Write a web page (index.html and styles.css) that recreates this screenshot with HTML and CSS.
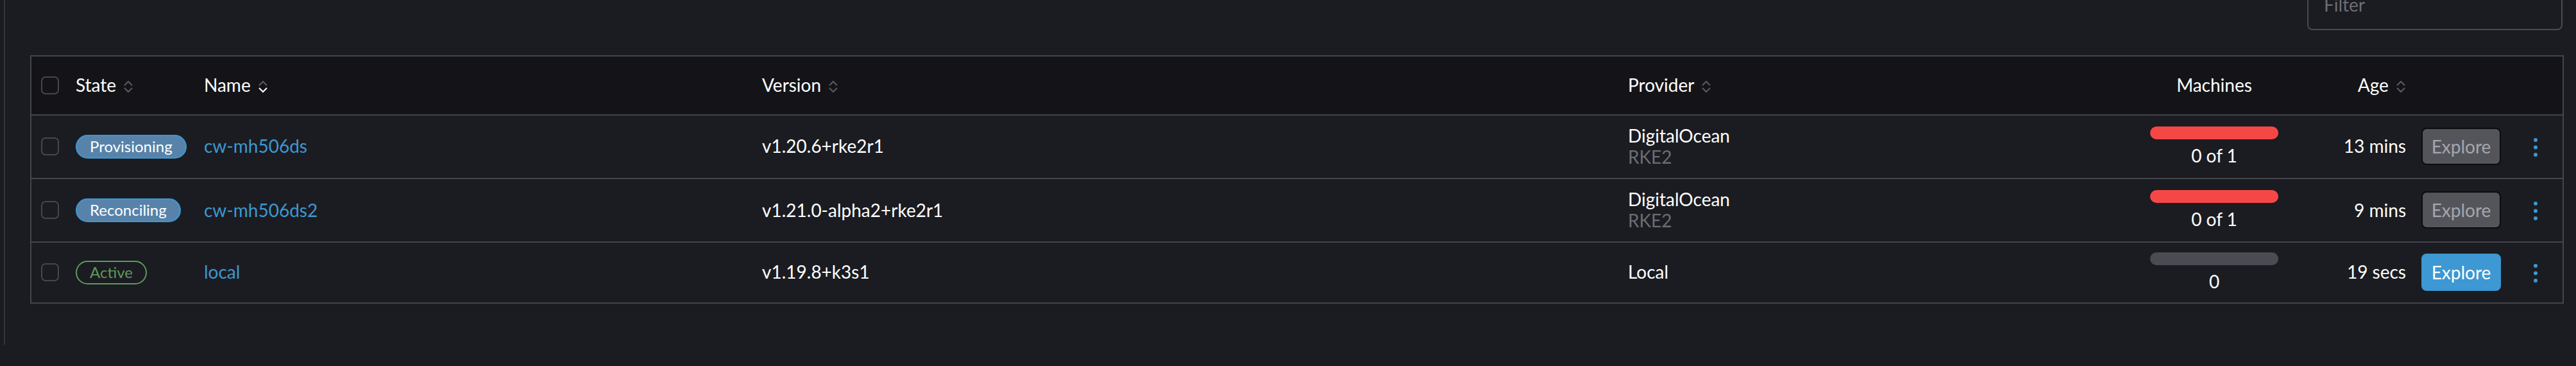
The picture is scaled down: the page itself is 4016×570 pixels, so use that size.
FILE: index.html
```html
<!DOCTYPE html>
<html lang="en">
<head>
    <meta charset="UTF-8">
    <meta name="viewport" content="width=device-width, initial-scale=1.0">
    <title>Clusters</title>
    <link rel="stylesheet" href="styles.css">
</head>
<body>
    <div class="main-content">
        <div class="table-header">
            <input type="search" class="filter-input" placeholder="Filter">
        </div>

        <table class="sortable-table">
            <colgroup>
                <col style="width: 69px">
                <col style="width: 200px">
                <col style="width: 870px">
                <col style="width: 1350px">
                <col style="width: 794px">
                <col style="width: 240px">
                <col style="width: 191px">
                <col style="width: 148px">
                <col style="width: 84px">
            </colgroup>
            <thead>
                <tr>
                    <th class="check"><span class="checkbox"></span></th>
                    <th>State <svg class="sort" viewBox="0 0 16 22"><polyline points="2,9 8,3 14,9" /><polyline points="2,13 8,19 14,13" /></svg></th>
                    <th>Name <svg class="sort sort-down" viewBox="0 0 16 22"><polyline points="2,9 8,3 14,9" /><polyline class="active" points="2,13 8,19 14,13" /></svg></th>
                    <th>Version <svg class="sort" viewBox="0 0 16 22"><polyline points="2,9 8,3 14,9" /><polyline points="2,13 8,19 14,13" /></svg></th>
                    <th>Provider <svg class="sort" viewBox="0 0 16 22"><polyline points="2,9 8,3 14,9" /><polyline points="2,13 8,19 14,13" /></svg></th>
                    <th class="center">Machines</th>
                    <th class="right">Age <svg class="sort" viewBox="0 0 16 22"><polyline points="2,9 8,3 14,9" /><polyline points="2,13 8,19 14,13" /></svg></th>
                    <th></th>
                    <th></th>
                </tr>
            </thead>
            <tbody>
                <tr>
                    <td class="check"><span class="checkbox"></span></td>
                    <td><span class="badge badge-info">Provisioning</span></td>
                    <td><a href="#" class="link">cw-mh506ds</a></td>
                    <td>v1.20.6+rke2r1</td>
                    <td>DigitalOcean<div class="text-muted">RKE2</div></td>
                    <td class="center">
                        <div class="machine-bar bar-error"></div>
                        <div>0 of 1</div>
                    </td>
                    <td class="right">13 mins</td>
                    <td class="btn-cell"><button class="btn btn-disabled">Explore</button></td>
                    <td class="center"><svg class="kebab" viewBox="0 0 8 32"><circle cx="4" cy="4" r="3" /><circle cx="4" cy="15.5" r="3" /><circle cx="4" cy="27" r="3" /></svg></td>
                </tr>
                <tr>
                    <td class="check"><span class="checkbox"></span></td>
                    <td><span class="badge badge-info">Reconciling</span></td>
                    <td><a href="#" class="link">cw-mh506ds2</a></td>
                    <td>v1.21.0-alpha2+rke2r1</td>
                    <td>DigitalOcean<div class="text-muted">RKE2</div></td>
                    <td class="center">
                        <div class="machine-bar bar-error"></div>
                        <div>0 of 1</div>
                    </td>
                    <td class="right">9 mins</td>
                    <td class="btn-cell"><button class="btn btn-disabled">Explore</button></td>
                    <td class="center"><svg class="kebab" viewBox="0 0 8 32"><circle cx="4" cy="4" r="3" /><circle cx="4" cy="15.5" r="3" /><circle cx="4" cy="27" r="3" /></svg></td>
                </tr>
                <tr>
                    <td class="check"><span class="checkbox"></span></td>
                    <td><span class="badge badge-success">Active</span></td>
                    <td><a href="#" class="link">local</a></td>
                    <td>v1.19.8+k3s1</td>
                    <td>Local</td>
                    <td class="center">
                        <div class="machine-bar"></div>
                        <div>0</div>
                    </td>
                    <td class="right">19 secs</td>
                    <td class="btn-cell"><button class="btn btn-primary">Explore</button></td>
                    <td class="center"><svg class="kebab" viewBox="0 0 8 32"><circle cx="4" cy="4" r="3" /><circle cx="4" cy="15.5" r="3" /><circle cx="4" cy="27" r="3" /></svg></td>
                </tr>
            </tbody>
        </table>
    </div>
</body>
</html>
```

FILE: styles.css
```css
body{
    margin: 0;
    background-color: #1b1c21;
    color: #ffffff;
    font-family: Lato, "Open Sans", sans-serif;
    font-size: 28px;
    line-height: 1.2;
    overflow: hidden;
}
.main-content{
    margin-left: 6px;
    border-left: 2px solid #34353b;
    min-height: 570px;
    padding: 0 19px 0 39px;
}
.table-header{
    display: flex;
    justify-content: flex-end;
    margin-top: -33px;
    margin-bottom: 39px;
    padding-right: 2px;
}
.filter-input{
    box-sizing: border-box;
    width: 398px;
    height: 80px;
    padding: 0 24px;
    border: 2px solid #4a4b52;
    border-radius: 8px;
    background: transparent;
    color: #ffffff;
    font-family: inherit;
    font-size: 28px;
    outline: none;
}
.filter-input::placeholder{
    color: #6c6d76;
}
.sortable-table{
    width: 100%;
    table-layout: fixed;
    border-collapse: separate;
    border-spacing: 0;
    border: 2px solid #44454c;
}
.sortable-table th{
    background-color: #141418;
    font-weight: 400;
    text-align: left;
    padding: 28px 0;
    border-bottom: 2px solid #44454c;
    white-space: nowrap;
}
.sortable-table td{
    padding: 15px 0;
    white-space: nowrap;
}
.sortable-table tbody tr:not(:last-child) td{
    border-bottom: 2px solid #44454c;
}
.sortable-table .check{
    padding-left: 15px;
}
.sortable-table .center{
    text-align: center;
}
.sortable-table .right{
    text-align: right;
    padding-right: 12px;
}
.sortable-table .btn-cell{
    padding-left: 12px;
}
.checkbox{
    display: block;
    box-sizing: border-box;
    width: 28px;
    height: 28px;
    border: 2px solid #46474d;
    border-radius: 7px;
}
.sort{
    width: 16px;
    height: 22px;
    margin-left: 4px;
    vertical-align: -3px;
    fill: none;
    stroke: #5a5b62;
    stroke-width: 2;
}
.sort .active{
    stroke: #ffffff;
}
.link{
    color: #3d98d3;
    text-decoration: none;
}
.text-muted{
    color: #6b6c74;
}
.badge{
    display: inline-block;
    padding: 2px 20px;
    border: 2px solid;
    border-radius: 20px;
    font-size: 24px;
}
.badge-info{
    background-color: #5783aa;
    border-color: #3d98d3;
    color: #ffffff;
}
.badge-success{
    border-color: #5d995d;
    color: #5d995d;
}
.machine-bar{
    width: 200px;
    height: 20px;
    margin: 0 auto 9px;
    border-radius: 10px;
    background-color: #4b4c53;
}
.bar-error{
    background-color: #f64747;
}
.btn{
    box-sizing: border-box;
    width: 124px;
    height: 58px;
    border: 2px solid;
    border-radius: 8px;
    font-family: inherit;
    font-size: 28px;
    padding: 0;
    cursor: pointer;
}
.btn-disabled{
    background-color: #54555b;
    border-color: #0c0c0f;
    color: #a5a6ae;
}
.btn-primary{
    background-color: #3d98d3;
    border-color: #3d98d3;
    color: #ffffff;
}
.kebab{
    width: 8px;
    height: 32px;
    vertical-align: middle;
    fill: #3d98d3;
}
```
